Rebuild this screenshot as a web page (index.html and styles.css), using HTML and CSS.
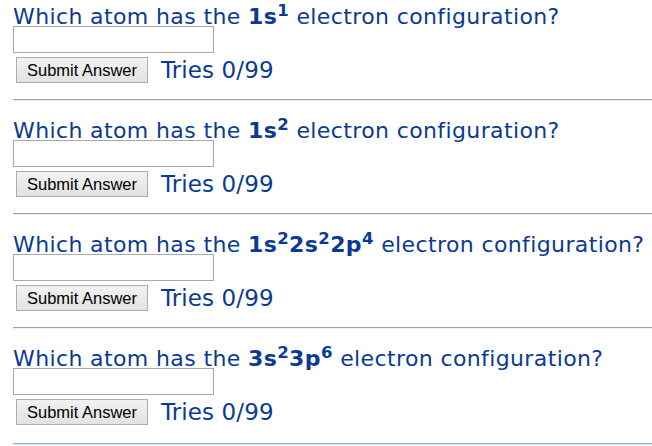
FILE: index.html
```html
<!DOCTYPE html>
<html lang="en">
<head>
    <meta charset="UTF-8">
    <title>Electron Configuration Quiz</title>
    <link rel="stylesheet" href="styles.css">
</head>
<body>

    <div class="question">
        <div class="prompt">Which atom has the <b>1s<sup>1</sup></b> electron configuration?</div>
        <input type="text" class="answer">
        <div class="controls">
            <button>Submit Answer</button>
            <span class="tries">Tries 0/99</span>
        </div>
    </div>
    <hr>

    <div class="question">
        <div class="prompt">Which atom has the <b>1s<sup>2</sup></b> electron configuration?</div>
        <input type="text" class="answer">
        <div class="controls">
            <button>Submit Answer</button>
            <span class="tries">Tries 0/99</span>
        </div>
    </div>
    <hr>

    <div class="question">
        <div class="prompt">Which atom has the <b>1s<sup>2</sup>2s<sup>2</sup>2p<sup>4</sup></b> electron configuration?</div>
        <input type="text" class="answer">
        <div class="controls">
            <button>Submit Answer</button>
            <span class="tries">Tries 0/99</span>
        </div>
    </div>
    <hr>

    <div class="question">
        <div class="prompt">Which atom has the <b>3s<sup>2</sup>3p<sup>6</sup></b> electron configuration?</div>
        <input type="text" class="answer">
        <div class="controls">
            <button>Submit Answer</button>
            <span class="tries">Tries 0/99</span>
        </div>
    </div>
    <div class="footer-line"></div>

</body>
</html>
```

FILE: styles.css
```css
body { margin: 0; padding: 0 0 0 13px; font-family: "DejaVu Sans", Verdana, sans-serif; color: #0a3a94; }
.prompt { font-size: 22px; line-height: 20px; padding-top: 7px; letter-spacing: 0.38px; }
.prompt sup { font-size: 0.75em; line-height: 0; vertical-align: 0.5em; }
.answer {
    display: block;
    width: 201px;
    height: 27px;
    box-sizing: border-box;
    margin: -1px 0 0 0;
    border: 1px solid #a9a9a9;
}
.controls { display: flex; align-items: center; gap: 13px; height: 26px; margin-top: 4px; padding-left: 3px; }
button {
    font-family: "Liberation Sans", Arial, sans-serif;
    font-size: 16.5px;
    color: #000;
    height: 26px;
    width: 132px;
    padding: 0;
    border: 1px solid #adadad;
    border-radius: 0;
    background: linear-gradient(#f2f2f2, #e2e2e2);
}
.tries { font-size: 23px; line-height: 26px; letter-spacing: 0.1px; }
hr { margin: 16px 0 13px 0; border: none; border-top: 1px solid #a0a0a0; border-bottom: 1px solid #eee; }
.footer-line { margin-top: 18px; border-top: 1px solid #7ab8f5; border-bottom: 1px solid #d6e8fb; }
```
